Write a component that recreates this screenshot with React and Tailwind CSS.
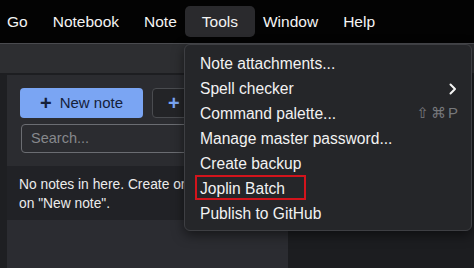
import React from "react";

const font = { fontFamily: '"Liberation Sans", Arial, sans-serif' };

function MenuItem({ label, right }) {
  return (
    <div className="flex h-[25px] items-center justify-between pl-[15px] pr-[13px] text-[15.6px] text-[#f2f2f2]">
      <span>{label}</span>
      {right}
    </div>
  );
}

export default function App() {
  return (
    <div className="relative h-[268px] w-[474px] overflow-hidden bg-[#1c1d20]" style={font}>
      {/* macOS menubar */}
      <div className="flex h-[43px] items-center gap-[25px] bg-[#030303] pl-[7px] text-[15.5px] text-[#f4f4f4]">
        <span>Go</span>
        <span>Notebook</span>
        <span>Note</span>
        <span className="-mx-[17px] rounded-[5px] bg-[#2a2a2d] px-[17px] py-[4px]">Tools</span>
        <span>Window</span>
        <span>Help</span>
      </div>

      {/* toolbar */}
      <div className="h-[32px] border-t border-[#4a4b4f] border-b-2 border-b-[#1d1e21] bg-[#2d2e31]" />

      {/* main */}
      <div className="flex h-[193px]">
        <div className="w-[7px] bg-[#1e1f22]" />
        <div className="flex w-[281px] flex-col bg-[#2b2c30]">
          <div className="flex flex-col gap-[6px] pt-[13px] pb-[13px] pl-[13px]">
            <div className="flex gap-[9px]">
              <div className="flex h-[30px] w-[123px] items-center justify-center gap-[8px] rounded-[4px] bg-[#7aa5f3] text-[15px] text-[#15213a]">
                <span className="text-[20px] font-bold leading-none">+</span>
                <span>New note</span>
              </div>
              <div className="flex h-[30px] w-[70px] items-center rounded-[4px] border border-[#4a4c50] bg-[#232427] pl-[15px] text-[20px] font-bold leading-none text-[#7aa5f3]">
                +
              </div>
            </div>
            <div className="ml-[1px] flex h-[29px] w-[255px] items-center rounded-[4px] border border-[#6b6d72] bg-[#2b2c30] pl-[9px] text-[14.5px] text-[#86888c]">
              Search...
            </div>
          </div>
          <div className="h-[54px] bg-[#212226] pl-[12px] pt-[9px] text-[13.8px] leading-[19px] text-[#ececec]">
            <div className="whitespace-nowrap">No notes in here. Create on</div>
            <div>on "New note".</div>
          </div>
          <div className="flex-1 bg-[#2b2c31]" />
        </div>
        <div className="flex-1 bg-[#1c1d20]" />
      </div>

      {/* Tools dropdown */}
      <div className="absolute left-[184px] top-[44px] w-[288px] rounded-[6px] border border-[#3e3f43] bg-[#252629] pt-[6px] pb-[4px] shadow-[0_4px_12px_rgba(0,0,0,0.5)]">
        <MenuItem label="Note attachments..." />
        <MenuItem
          label="Spell checker"
          right={
            <svg width="8" height="12" viewBox="0 0 8 12" className="mr-[1px]">
              <path d="M1.5 1.5 L6 6 L1.5 10.5" fill="none" stroke="#f4f4f4" strokeWidth="2" strokeLinecap="round" strokeLinejoin="round" />
            </svg>
          }
        />
        <MenuItem
          label="Command palette..."
          right={
            <span className="flex gap-[2px] text-[15px] text-[#77787c]" style={{ fontFamily: '"DejaVu Sans", sans-serif' }}>
              <span>⇧</span>
              <span>⌘</span>
              <span style={font}>P</span>
            </span>
          }
        />
        <MenuItem label="Manage master password..." />
        <MenuItem label="Create backup" />
        <MenuItem label="Joplin Batch" />
        <MenuItem label="Publish to GitHub" />
      </div>

      {/* red annotation box */}
      <div className="absolute left-[195px] top-[175px] h-[25px] w-[111px] border-2 border-[#d3141c]" />
    </div>
  );
}
